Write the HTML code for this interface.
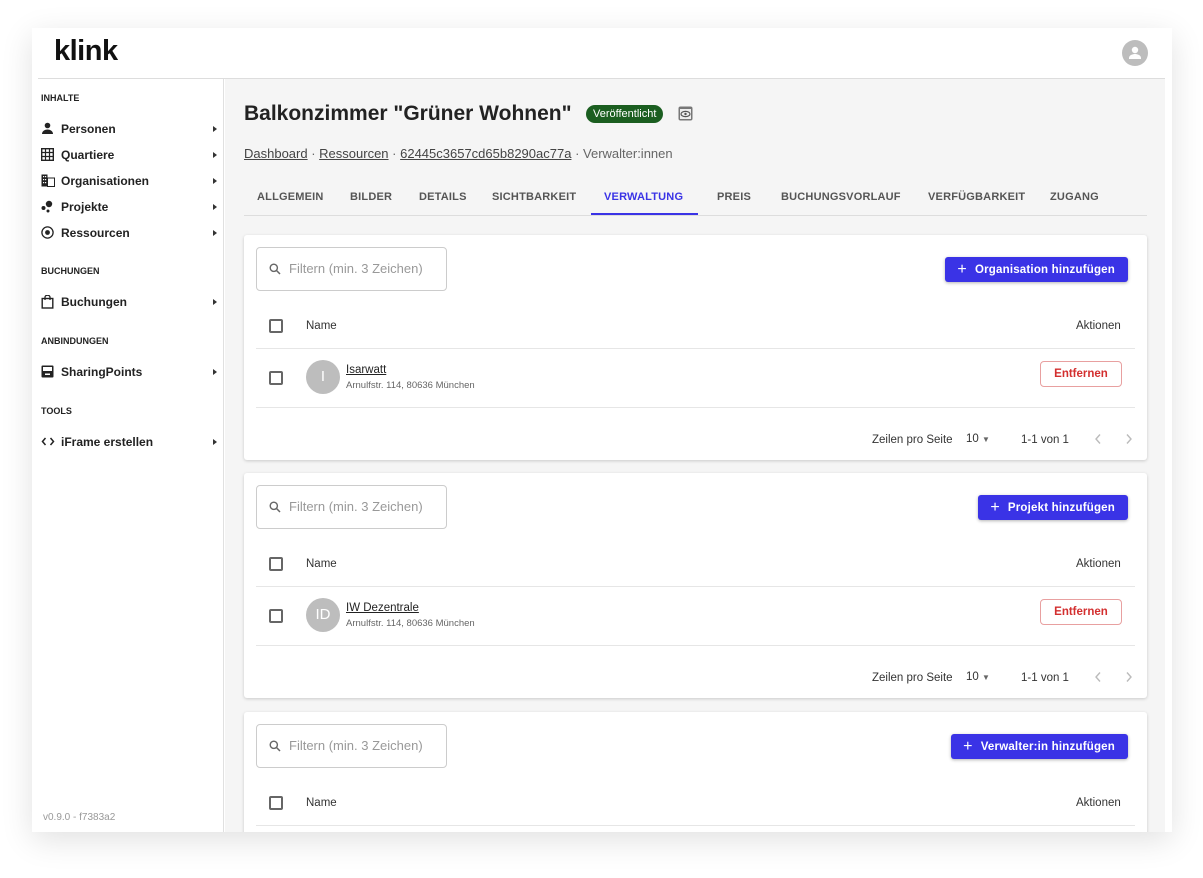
<!DOCTYPE html>
<html><head><meta charset="utf-8"><style>
*{box-sizing:border-box;margin:0;padding:0}
body{width:1203px;height:878px;background:#fff;font-family:"Liberation Sans",Arial,sans-serif;position:relative;overflow:hidden;color:#222}
.win{position:absolute;left:32px;top:28px;width:1140px;height:804px;background:#fff;box-shadow:0 8px 30px rgba(0,0,0,.12);overflow:hidden}
.hdr{position:absolute;left:6px;top:50px;width:1127px;border-top:1px solid #ddd}
.logo{position:absolute;left:22px;top:7px;font-size:29px;font-weight:bold;letter-spacing:-0.5px;color:#111}
.avatar{position:absolute;left:1090px;top:12px;width:26px;height:26px;border-radius:50%;background:#bdbdbd}
.side{position:absolute;left:0;top:51px;width:192px;height:760px;border-right:1px solid #e0e0e0;background:#fff}
.sec{position:absolute;left:9px;font-size:9px;font-weight:bold;color:#222}
.item{position:absolute;left:9px;width:176px;font-size:12px;font-weight:bold;color:#222;height:16px;line-height:16px}
.item svg{position:absolute;left:0;top:1px}
.item span{position:absolute;left:20px}
.item i{position:absolute;right:0;top:5px;width:0;height:0;border-left:4px solid #333;border-top:3px solid transparent;border-bottom:3px solid transparent}
.ver{position:absolute;left:11px;top:784px;font-size:10px;color:#999}
.main{position:absolute;left:193px;top:51px;width:940px;height:760px;background:#f5f5f5}
h1{position:absolute;left:19px;top:23px;font-size:21px;font-weight:bold;color:#222}
.badge{position:absolute;left:361px;top:26px;background:#1b5e20;color:#fff;font-size:11px;border-radius:10px;padding:2px 7px;height:18px;line-height:14px}
.bc{position:absolute;left:19px;top:67px;font-size:13px;color:#666}
.bc u{color:#444}
.tabs{position:absolute;left:19px;top:108px;width:903px;height:29px;border-bottom:1px solid #ddd}
.tab{position:absolute;top:4px;font-size:11px;font-weight:bold;color:#555;letter-spacing:.2px}
.card{position:absolute;left:19px;width:903px;background:#fff;border-radius:3px;box-shadow:0 1px 3px rgba(0,0,0,.18)}
.search{position:absolute;left:12px;top:12px;width:191px;height:44px;border:1px solid #ccc;border-radius:4px;font-size:13px;color:#999;line-height:42px;padding-left:32px}
.search svg{position:absolute;left:12px;top:15px}
.btn{position:absolute;right:19px;top:22px;height:25px;background:#3a33e6;color:#fff;font-size:11.5px;font-weight:bold;border-radius:3px;line-height:25px;padding:0 13px 0 12px;box-shadow:0 1px 3px rgba(0,0,0,.3);letter-spacing:.2px}
.btn b{font-size:16px;font-weight:normal;margin-right:8px;vertical-align:-1px}
.cb{position:absolute;left:25px;width:14px;height:14px;border:2px solid #666;border-radius:2px}
.th{position:absolute;font-size:11.5px;color:#333}
.line{position:absolute;left:12px;width:879px;border-top:1px solid #e6e6e6}
.av{position:absolute;left:62px;width:34px;height:34px;border-radius:50%;background:#bdbdbd;color:#fff;font-size:15px;text-align:center;line-height:34px}
.nm{position:absolute;left:102px;font-size:11.5px;color:#222;text-decoration:underline}
.ad{position:absolute;left:102px;font-size:9.5px;color:#666}
.rm{position:absolute;left:796px;width:82px;height:26px;border:1px solid #e8a0a0;border-radius:4px;color:#d32f2f;font-size:11.5px;font-weight:bold;text-align:center;line-height:24px}
.pg{position:absolute;font-size:11.5px;color:#333}
.ch{position:absolute}
</style></head><body>
<div class="win">
<div class="logo">klink</div>
<div class="avatar"><svg width="26" height="26" viewBox="0 0 26 26"><circle cx="13" cy="10" r="3.2" fill="#fff"/><path d="M7 18c0-3 4-4 6-4s6 1 6 4v1H7z" fill="#fff"/></svg></div>
<div class="hdr"></div>
<div class="side">
<div class="sec" style="top:14px">INHALTE</div>
<div class="item" style="top:42px"><svg width="13" height="13" viewBox="0 0 13 13"><circle cx="6.5" cy="3.5" r="2.8" fill="#222"/><path d="M1 12c0-3 3-4.5 5.5-4.5S12 9 12 12z" fill="#222"/></svg><span>Personen</span><i></i></div>
<div class="item" style="top:68px"><svg width="13" height="13" viewBox="0 0 13 13"><rect x="0.7" y="0.7" width="11.6" height="11.6" fill="none" stroke="#222" stroke-width="1.4"/><path d="M4.5 1v11M8.5 1v11M1 4.5h11M1 8.5h11" stroke="#222" stroke-width="1.2"/></svg><span>Quartiere</span><i></i></div>
<div class="item" style="top:94px"><svg width="14" height="13" viewBox="0 0 14 13"><rect x="0.5" y="0.5" width="6" height="12" fill="#222"/><rect x="6.5" y="4" width="7" height="8.5" fill="none" stroke="#222"/><rect x="2" y="2" width="1.2" height="1.2" fill="#fff"/><rect x="4" y="2" width="1.2" height="1.2" fill="#fff"/><rect x="2" y="5" width="1.2" height="1.2" fill="#fff"/><rect x="4" y="5" width="1.2" height="1.2" fill="#fff"/><rect x="2" y="8" width="1.2" height="1.2" fill="#fff"/><rect x="4" y="8" width="1.2" height="1.2" fill="#fff"/></svg><span>Organisationen</span><i></i></div>
<div class="item" style="top:120px"><svg width="13" height="13" viewBox="0 0 13 13"><circle cx="8" cy="4" r="3.2" fill="#222"/><circle cx="2.5" cy="8" r="2" fill="#222"/><circle cx="7" cy="11" r="1.5" fill="#222"/></svg><span>Projekte</span><i></i></div>
<div class="item" style="top:146px"><svg width="13" height="13" viewBox="0 0 13 13"><circle cx="6.5" cy="6.5" r="5.6" fill="none" stroke="#222" stroke-width="1.3"/><circle cx="6.5" cy="6.5" r="2.4" fill="#222"/></svg><span>Ressourcen</span><i></i></div>
<div class="sec" style="top:187px">BUCHUNGEN</div>
<div class="item" style="top:215px"><svg width="13" height="14" viewBox="0 0 13 14"><rect x="1.2" y="3.5" width="10.6" height="9.5" fill="none" stroke="#222" stroke-width="1.4"/><path d="M4 5V2.2a2.5 2 0 0 1 5 0V5" fill="none" stroke="#222" stroke-width="1.3"/></svg><span>Buchungen</span><i></i></div>
<div class="sec" style="top:257px">ANBINDUNGEN</div>
<div class="item" style="top:285px"><svg width="13" height="13" viewBox="0 0 13 13"><rect x="0.5" y="0.5" width="12" height="12" rx="1" fill="#222"/><rect x="2" y="2" width="9" height="4" fill="#fff"/><rect x="4" y="8.5" width="5" height="1.5" fill="#fff"/></svg><span>SharingPoints</span><i></i></div>
<div class="sec" style="top:327px">TOOLS</div>
<div class="item" style="top:355px"><svg width="14" height="13" viewBox="0 0 14 13"><path d="M4.5 3L1.5 6.5 4.5 10M9.5 3l3 3.5-3 3.5" fill="none" stroke="#222" stroke-width="1.5"/></svg><span>iFrame erstellen</span><i></i></div>
<div class="ver" style="top:733px">v0.9.0 - f7383a2</div>
</div>
<div class="main">
<h1>Balkonzimmer "Grüner Wohnen"</h1>
<div class="badge">Veröffentlicht</div>
<svg style="position:absolute;left:453px;top:27px" width="15" height="15" viewBox="0 0 15 15"><rect x="0.5" y="0.5" width="14" height="14" rx="2" fill="#777"/><rect x="2" y="3" width="11" height="10" fill="#eee"/><ellipse cx="7.5" cy="8" rx="4.5" ry="2.6" fill="none" stroke="#555" stroke-width="1.2"/><circle cx="7.5" cy="8" r="1.2" fill="#555"/></svg>
<div class="bc"><u>Dashboard</u> · <u>Ressourcen</u> · <u>62445c3657cd65b8290ac77a</u> · Verwalter:innen</div>
<div class="tabs">
<div class="tab" style="left:13px">ALLGEMEIN</div>
<div class="tab" style="left:106px">BILDER</div>
<div class="tab" style="left:175px">DETAILS</div>
<div class="tab" style="left:248px">SICHTBARKEIT</div>
<div class="tab" style="left:360px;color:#3a33e6">VERWALTUNG</div>
<div style="position:absolute;left:347px;top:26px;width:107px;height:2px;background:#3a33e6"></div>
<div class="tab" style="left:473px">PREIS</div>
<div class="tab" style="left:537px">BUCHUNGSVORLAUF</div>
<div class="tab" style="left:684px">VERFÜGBARKEIT</div>
<div class="tab" style="left:806px">ZUGANG</div>
</div>

<div class="card" style="top:156px;height:225px">
<div class="search"><svg width="12" height="12" viewBox="0 0 12 12"><circle cx="4.8" cy="4.8" r="3.6" fill="none" stroke="#666" stroke-width="1.4"/><path d="M7.5 7.5L11 11" stroke="#666" stroke-width="1.5"/></svg>Filtern (min. 3 Zeichen)</div>
<div class="btn"><b>+</b>Organisation hinzufügen</div>
<div class="cb" style="top:84px"></div><div class="th" style="left:62px;top:85px">Name</div><div class="th" style="left:832px;top:85px">Aktionen</div>
<div class="line" style="top:113px"></div>
<div class="av" style="top:125px">I</div>
<div class="cb" style="top:136px"></div>
<div class="nm" style="top:129px">Isarwatt</div><div class="ad" style="top:145px">Arnulfstr. 114, 80636 München</div>
<div class="rm" style="top:126px">Entfernen</div>
<div class="line" style="top:172px"></div>
<div class="pg" style="left:628px;top:199px">Zeilen pro Seite</div><div class="pg" style="left:722px;top:198px">10 <span style="font-size:8px;color:#666">▼</span></div><div class="pg" style="left:777px;top:199px">1-1 von 1</div>
<svg class="ch" style="left:850px;top:198px" width="8" height="12" viewBox="0 0 8 12"><path d="M6 1.5L2 6l4 4.5" fill="none" stroke="#bbb" stroke-width="1.4"/></svg>
<svg class="ch" style="left:881px;top:198px" width="8" height="12" viewBox="0 0 8 12"><path d="M2 1.5L6 6l-4 4.5" fill="none" stroke="#bbb" stroke-width="1.4"/></svg>
</div>

<div class="card" style="top:394px;height:225px">
<div class="search"><svg width="12" height="12" viewBox="0 0 12 12"><circle cx="4.8" cy="4.8" r="3.6" fill="none" stroke="#666" stroke-width="1.4"/><path d="M7.5 7.5L11 11" stroke="#666" stroke-width="1.5"/></svg>Filtern (min. 3 Zeichen)</div>
<div class="btn"><b>+</b>Projekt hinzufügen</div>
<div class="cb" style="top:84px"></div><div class="th" style="left:62px;top:85px">Name</div><div class="th" style="left:832px;top:85px">Aktionen</div>
<div class="line" style="top:113px"></div>
<div class="av" style="top:125px">ID</div>
<div class="cb" style="top:136px"></div>
<div class="nm" style="top:129px">IW Dezentrale</div><div class="ad" style="top:145px">Arnulfstr. 114, 80636 München</div>
<div class="rm" style="top:126px">Entfernen</div>
<div class="line" style="top:172px"></div>
<div class="pg" style="left:628px;top:199px">Zeilen pro Seite</div><div class="pg" style="left:722px;top:198px">10 <span style="font-size:8px;color:#666">▼</span></div><div class="pg" style="left:777px;top:199px">1-1 von 1</div>
<svg class="ch" style="left:850px;top:198px" width="8" height="12" viewBox="0 0 8 12"><path d="M6 1.5L2 6l4 4.5" fill="none" stroke="#bbb" stroke-width="1.4"/></svg>
<svg class="ch" style="left:881px;top:198px" width="8" height="12" viewBox="0 0 8 12"><path d="M2 1.5L6 6l-4 4.5" fill="none" stroke="#bbb" stroke-width="1.4"/></svg>
</div>

<div class="card" style="top:633px;height:200px">
<div class="search"><svg width="12" height="12" viewBox="0 0 12 12"><circle cx="4.8" cy="4.8" r="3.6" fill="none" stroke="#666" stroke-width="1.4"/><path d="M7.5 7.5L11 11" stroke="#666" stroke-width="1.5"/></svg>Filtern (min. 3 Zeichen)</div>
<div class="btn"><b>+</b>Verwalter:in hinzufügen</div>
<div class="cb" style="top:84px"></div><div class="th" style="left:62px;top:85px">Name</div><div class="th" style="left:832px;top:85px">Aktionen</div>
<div class="line" style="top:113px"></div>
</div>
</div>
</div>
</body></html>
